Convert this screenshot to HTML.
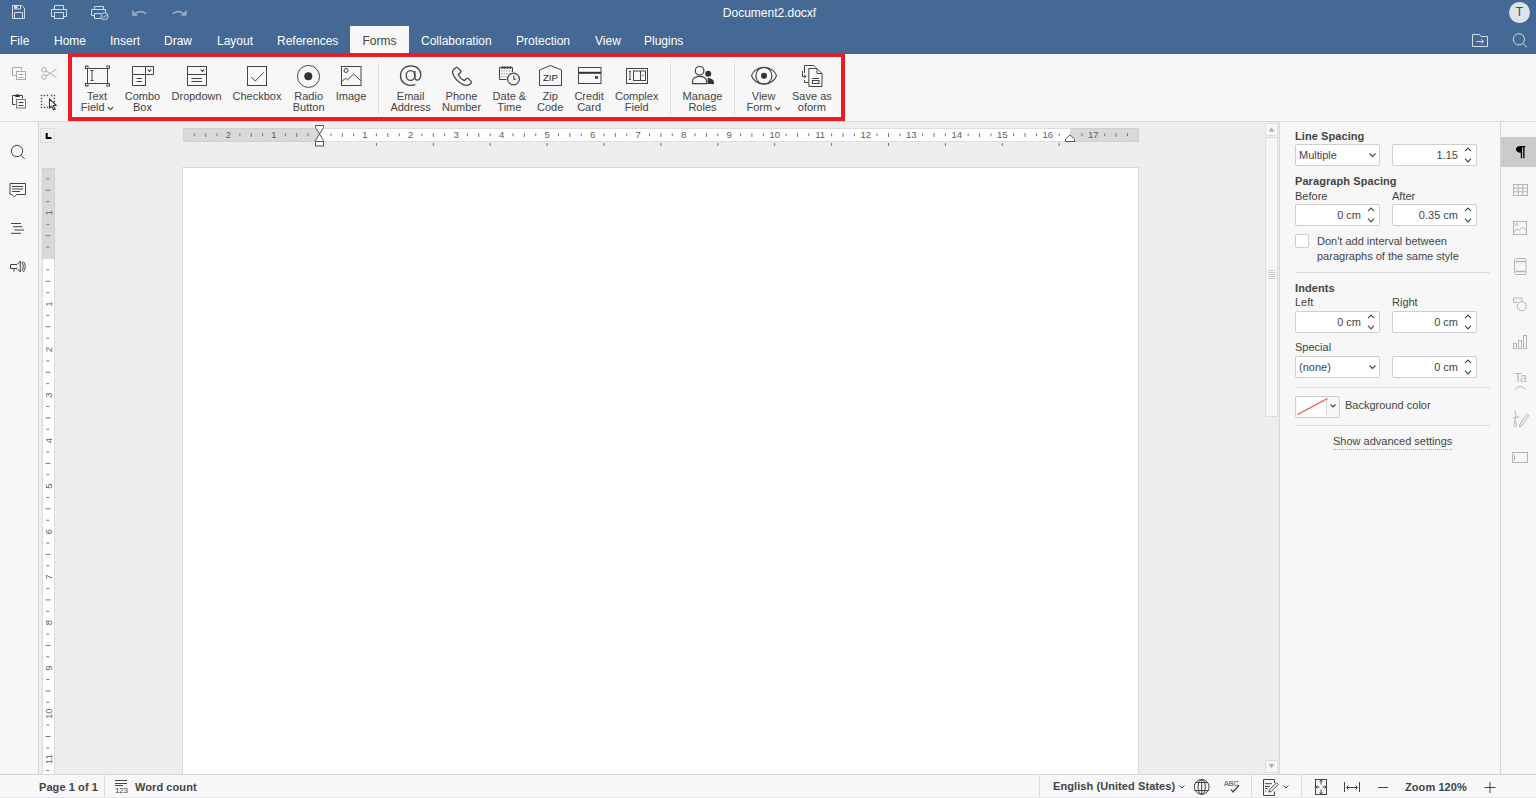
<!DOCTYPE html>
<html><head><meta charset="utf-8">
<style>
*{margin:0;padding:0;box-sizing:border-box}
html,body{width:1536px;height:798px;overflow:hidden;background:#f7f7f7;font-family:"Liberation Sans",sans-serif;color:#444}
.abs{position:absolute}
#hdr{position:absolute;left:0;top:0;width:1536px;height:54px;background:#446995}
#title{position:absolute;left:0;top:5px;width:1539px;text-align:center;font-size:12px;color:#fff;line-height:16px}
.tab{position:absolute;top:26px;height:28px;font-size:12px;line-height:30px;color:#fff;white-space:nowrap}
.tab.act{background:#f7f7f7;color:#444}
#tb{position:absolute;left:0;top:54px;width:1536px;height:68px;background:#f7f7f7;border-bottom:1px solid #d8d8d8}
#redbox{position:absolute;left:68px;top:53px;width:777px;height:68px;border:4px solid #ed1c24}
.cap{position:absolute;top:90.5px;font-size:11px;line-height:11px;text-align:center;white-space:nowrap;color:#444;transform:translateX(-50%)}
.sep{position:absolute;top:62px;width:1px;height:52px;background:#dcdcdc}
#left{position:absolute;left:0;top:122px;width:39px;height:652px;background:#f7f7f7;border-right:1px solid #d6d6d6}
#canvas{position:absolute;left:39px;top:122px;width:1240px;height:652px;background:#eeeeee}
#right{position:absolute;left:1279px;top:122px;width:257px;height:652px;background:#f7f7f7;border-left:1px solid #d6d6d6}
#rbar{position:absolute;left:1500px;top:122px;width:36px;height:652px;border-left:1px solid #d6d6d6;background:#f7f7f7}
#status{position:absolute;left:0;top:774px;width:1536px;height:24px;background:#f7f7f7;border-top:1px solid #d6d6d6}
#page{position:absolute;left:182px;top:167px;width:957px;height:620px;background:#fff;border:1px solid #dadada}
.lbl{position:absolute;font-size:11px;line-height:14px;color:#444;white-space:nowrap}
.lblb{position:absolute;font-size:11px;line-height:14px;color:#444;font-weight:bold;white-space:nowrap;letter-spacing:0.08px}
.inp{position:absolute;height:22px;background:#fff;border:1px solid #cfcfcf;border-radius:2px;font-size:11px;line-height:20px;color:#444}
svg{position:absolute;overflow:visible}
</style></head><body>
<div id="hdr"></div>
<div id="title">Document2.docxf</div>

<svg width="1536" height="53" style="left:0;top:0" fill="none" stroke="#d3dbe6" stroke-width="1">
 <!-- save -->
 <path d="M12.5,5.5 H21.8 L24.5,8.2 V18.5 H12.5 Z"/>
 <path d="M14.5,5.5 V9 H20.5 V5.5"/>
 <rect x="14.6" y="6" width="3" height="2.5" fill="#d3dbe6" stroke="none"/>
 <path d="M14.5,18.5 V12.5 H22.5 V18.5"/>
 <!-- print -->
 <path d="M54.5,9.5 V5.5 H63.5 V9.5"/>
 <path d="M54.5,16.5 H51.5 V9.5 H66.5 V16.5 H63.5"/>
 <rect x="54.5" y="12.5" width="9" height="6"/>
 <!-- quick print -->
 <path d="M94.5,9.5 V6.5 H103.5 V9.5"/>
 <path d="M94.5,15.5 H91.5 V9.5 H105.5 V12.5"/>
 <path d="M101,18.5 H94.5 V13.5 H101"/>
 <circle cx="104.5" cy="16.2" r="3.5"/>
 <path d="M102.8,16.3 L104,17.5 L106.3,15"/>
 <!-- folder -->
 <path d="M1472.5,46.5 V34.5 H1479.5 L1481,36.5 H1487.5 V46.5 Z"/>
 <path d="M1476.3,41.5 H1483.5 M1481.3,39.3 L1483.6,41.5 L1481.3,43.7"/>
 <!-- search -->
 <circle cx="1518.9" cy="39.3" r="5.6"/>
 <path d="M1522.8,43.3 L1526.8,47.3"/>
</svg>
<svg width="200" height="30" style="left:0;top:0" fill="#fff" opacity="0.45">
 <path d="M132.2,9.8 V15.8 H138.3 L136.4,13.9 C139,11.8 143,11.8 145.8,14.6 L146.6,13.4 C143.4,10 138.2,9.8 135.3,12.9 Z"/>
 <path d="M186.6,9.8 V15.8 H180.5 L182.4,13.9 C179.8,11.8 175.8,11.8 173,14.6 L172.2,13.4 C175.4,10 180.6,9.8 183.5,12.9 Z"/>
</svg>
<div class="abs" style="left:1509px;top:2px;width:21px;height:21px;border-radius:50%;background:#dde3ea;color:#444;font-size:12px;line-height:21px;text-align:center">T</div>
<div class="tab" style="left:0;padding:0 10px">File</div>
<div class="tab" style="left:42px;padding:0 12px">Home</div>
<div class="tab" style="left:98px;padding:0 12px">Insert</div>
<div class="tab" style="left:152px;padding:0 12px">Draw</div>
<div class="tab" style="left:205px;padding:0 12px">Layout</div>
<div class="tab" style="left:265px;padding:0 12px">References</div>
<div class="tab act" style="left:350px;width:59px;text-align:center">Forms</div>
<div class="tab" style="left:409px;padding:0 12px">Collaboration</div>
<div class="tab" style="left:504px;padding:0 12px">Protection</div>
<div class="tab" style="left:583px;padding:0 12px">View</div>
<div class="tab" style="left:632px;padding:0 12px">Plugins</div>

<div id="tb"></div>
<div id="left"></div>
<div id="canvas"></div>
<div id="page"></div>
<div class="abs" style="left:183px;top:128px;width:956px;height:14px;background:#d9d9d9;border:1px solid #d0d0d0"></div>
<div class="abs" style="left:320px;top:128px;width:750px;height:14px;background:#fff;border-top:1px solid #dcdcdc;border-bottom:1px solid #dcdcdc"></div>
<div class="abs" style="left:42px;top:168px;width:13px;height:606px;background:#fff;border-left:1px solid #dcdcdc;border-right:1px solid #dcdcdc"></div>
<div class="abs" style="left:42px;top:168px;width:13px;height:91px;background:#d9d9d9;border:1px solid #d0d0d0;border-bottom:none"></div>
<svg width="1536" height="798" style="left:0;top:0" fill="#666">
<rect x="193.82" y="133.3" width="1" height="3" fill="#777"/>
<rect x="205.20" y="133" width="1" height="4" fill="#777"/>
<rect x="216.58" y="133.3" width="1" height="3" fill="#777"/>
<text x="228.46" y="138" font-family="Liberation Sans" font-size="9.5" text-anchor="middle" fill="#606060">2</text>
<rect x="239.34" y="133.3" width="1" height="3" fill="#777"/>
<rect x="250.72" y="133" width="1" height="4" fill="#777"/>
<rect x="262.10" y="133.3" width="1" height="3" fill="#777"/>
<text x="273.98" y="138" font-family="Liberation Sans" font-size="9.5" text-anchor="middle" fill="#606060">1</text>
<rect x="284.86" y="133.3" width="1" height="3" fill="#777"/>
<rect x="296.24" y="133" width="1" height="4" fill="#777"/>
<rect x="307.62" y="133.3" width="1" height="3" fill="#777"/>
<rect x="330.38" y="133.3" width="1" height="3" fill="#777"/>
<rect x="341.76" y="133" width="1" height="4" fill="#777"/>
<rect x="353.14" y="133.3" width="1" height="3" fill="#777"/>
<text x="365.02" y="138" font-family="Liberation Sans" font-size="9.5" text-anchor="middle" fill="#606060">1</text>
<rect x="375.90" y="133.3" width="1" height="3" fill="#777"/>
<rect x="387.28" y="133" width="1" height="4" fill="#777"/>
<rect x="398.66" y="133.3" width="1" height="3" fill="#777"/>
<text x="410.54" y="138" font-family="Liberation Sans" font-size="9.5" text-anchor="middle" fill="#606060">2</text>
<rect x="421.42" y="133.3" width="1" height="3" fill="#777"/>
<rect x="432.80" y="133" width="1" height="4" fill="#777"/>
<rect x="444.18" y="133.3" width="1" height="3" fill="#777"/>
<text x="456.06" y="138" font-family="Liberation Sans" font-size="9.5" text-anchor="middle" fill="#606060">3</text>
<rect x="466.94" y="133.3" width="1" height="3" fill="#777"/>
<rect x="478.32" y="133" width="1" height="4" fill="#777"/>
<rect x="489.70" y="133.3" width="1" height="3" fill="#777"/>
<text x="501.58" y="138" font-family="Liberation Sans" font-size="9.5" text-anchor="middle" fill="#606060">4</text>
<rect x="512.46" y="133.3" width="1" height="3" fill="#777"/>
<rect x="523.84" y="133" width="1" height="4" fill="#777"/>
<rect x="535.22" y="133.3" width="1" height="3" fill="#777"/>
<text x="547.10" y="138" font-family="Liberation Sans" font-size="9.5" text-anchor="middle" fill="#606060">5</text>
<rect x="557.98" y="133.3" width="1" height="3" fill="#777"/>
<rect x="569.36" y="133" width="1" height="4" fill="#777"/>
<rect x="580.74" y="133.3" width="1" height="3" fill="#777"/>
<text x="592.62" y="138" font-family="Liberation Sans" font-size="9.5" text-anchor="middle" fill="#606060">6</text>
<rect x="603.50" y="133.3" width="1" height="3" fill="#777"/>
<rect x="614.88" y="133" width="1" height="4" fill="#777"/>
<rect x="626.26" y="133.3" width="1" height="3" fill="#777"/>
<text x="638.14" y="138" font-family="Liberation Sans" font-size="9.5" text-anchor="middle" fill="#606060">7</text>
<rect x="649.02" y="133.3" width="1" height="3" fill="#777"/>
<rect x="660.40" y="133" width="1" height="4" fill="#777"/>
<rect x="671.78" y="133.3" width="1" height="3" fill="#777"/>
<text x="683.66" y="138" font-family="Liberation Sans" font-size="9.5" text-anchor="middle" fill="#606060">8</text>
<rect x="694.54" y="133.3" width="1" height="3" fill="#777"/>
<rect x="705.92" y="133" width="1" height="4" fill="#777"/>
<rect x="717.30" y="133.3" width="1" height="3" fill="#777"/>
<text x="729.18" y="138" font-family="Liberation Sans" font-size="9.5" text-anchor="middle" fill="#606060">9</text>
<rect x="740.06" y="133.3" width="1" height="3" fill="#777"/>
<rect x="751.44" y="133" width="1" height="4" fill="#777"/>
<rect x="762.82" y="133.3" width="1" height="3" fill="#777"/>
<text x="774.70" y="138" font-family="Liberation Sans" font-size="9.5" text-anchor="middle" fill="#606060">10</text>
<rect x="785.58" y="133.3" width="1" height="3" fill="#777"/>
<rect x="796.96" y="133" width="1" height="4" fill="#777"/>
<rect x="808.34" y="133.3" width="1" height="3" fill="#777"/>
<text x="820.22" y="138" font-family="Liberation Sans" font-size="9.5" text-anchor="middle" fill="#606060">11</text>
<rect x="831.10" y="133.3" width="1" height="3" fill="#777"/>
<rect x="842.48" y="133" width="1" height="4" fill="#777"/>
<rect x="853.86" y="133.3" width="1" height="3" fill="#777"/>
<text x="865.74" y="138" font-family="Liberation Sans" font-size="9.5" text-anchor="middle" fill="#606060">12</text>
<rect x="876.62" y="133.3" width="1" height="3" fill="#777"/>
<rect x="888.00" y="133" width="1" height="4" fill="#777"/>
<rect x="899.38" y="133.3" width="1" height="3" fill="#777"/>
<text x="911.26" y="138" font-family="Liberation Sans" font-size="9.5" text-anchor="middle" fill="#606060">13</text>
<rect x="922.14" y="133.3" width="1" height="3" fill="#777"/>
<rect x="933.52" y="133" width="1" height="4" fill="#777"/>
<rect x="944.90" y="133.3" width="1" height="3" fill="#777"/>
<text x="956.78" y="138" font-family="Liberation Sans" font-size="9.5" text-anchor="middle" fill="#606060">14</text>
<rect x="967.66" y="133.3" width="1" height="3" fill="#777"/>
<rect x="979.04" y="133" width="1" height="4" fill="#777"/>
<rect x="990.42" y="133.3" width="1" height="3" fill="#777"/>
<text x="1002.30" y="138" font-family="Liberation Sans" font-size="9.5" text-anchor="middle" fill="#606060">15</text>
<rect x="1013.18" y="133.3" width="1" height="3" fill="#777"/>
<rect x="1024.56" y="133" width="1" height="4" fill="#777"/>
<rect x="1035.94" y="133.3" width="1" height="3" fill="#777"/>
<text x="1047.82" y="138" font-family="Liberation Sans" font-size="9.5" text-anchor="middle" fill="#606060">16</text>
<rect x="1058.70" y="133.3" width="1" height="3" fill="#777"/>

<rect x="1081.46" y="133.3" width="1" height="3" fill="#777"/>
<text x="1093.34" y="138" font-family="Liberation Sans" font-size="9.5" text-anchor="middle" fill="#606060">17</text>
<rect x="1104.22" y="133.3" width="1" height="3" fill="#777"/>
<rect x="1115.60" y="133" width="1" height="4" fill="#777"/>
<rect x="1126.98" y="133.3" width="1" height="3" fill="#777"/>
<rect x="375.90" y="143" width="1" height="3" fill="#777"/>
<rect x="432.80" y="143" width="1" height="3" fill="#777"/>
<rect x="489.70" y="143" width="1" height="3" fill="#777"/>
<rect x="546.60" y="143" width="1" height="3" fill="#777"/>
<rect x="603.50" y="143" width="1" height="3" fill="#777"/>
<rect x="660.40" y="143" width="1" height="3" fill="#777"/>
<rect x="717.30" y="143" width="1" height="3" fill="#777"/>
<rect x="774.20" y="143" width="1" height="3" fill="#777"/>
<rect x="831.10" y="143" width="1" height="3" fill="#777"/>
<rect x="888.00" y="143" width="1" height="3" fill="#777"/>
<rect x="944.90" y="143" width="1" height="3" fill="#777"/>
<rect x="1001.80" y="143" width="1" height="3" fill="#777"/>
<rect x="1058.70" y="143" width="1" height="3" fill="#777"/>
</svg>
<svg width="1536" height="798" style="left:0;top:0" fill="#666">
<rect x="46.3" y="178.34" width="3" height="1" fill="#777"/>
<rect x="45.5" y="189.72" width="5" height="1" fill="#777"/>
<rect x="46.3" y="201.10" width="3" height="1" fill="#777"/>
<text x="0" y="0" transform="translate(52.3,212.98) rotate(-90)" font-family="Liberation Sans" font-size="9.5" text-anchor="middle" fill="#606060">1</text>
<rect x="46.3" y="223.86" width="3" height="1" fill="#777"/>
<rect x="45.5" y="235.24" width="5" height="1" fill="#777"/>
<rect x="46.3" y="246.62" width="3" height="1" fill="#777"/>
<rect x="46.3" y="269.38" width="3" height="1" fill="#777"/>
<rect x="45.5" y="280.76" width="5" height="1" fill="#777"/>
<rect x="46.3" y="292.14" width="3" height="1" fill="#777"/>
<text x="0" y="0" transform="translate(52.3,304.02) rotate(-90)" font-family="Liberation Sans" font-size="9.5" text-anchor="middle" fill="#606060">1</text>
<rect x="46.3" y="314.90" width="3" height="1" fill="#777"/>
<rect x="45.5" y="326.28" width="5" height="1" fill="#777"/>
<rect x="46.3" y="337.66" width="3" height="1" fill="#777"/>
<text x="0" y="0" transform="translate(52.3,349.54) rotate(-90)" font-family="Liberation Sans" font-size="9.5" text-anchor="middle" fill="#606060">2</text>
<rect x="46.3" y="360.42" width="3" height="1" fill="#777"/>
<rect x="45.5" y="371.80" width="5" height="1" fill="#777"/>
<rect x="46.3" y="383.18" width="3" height="1" fill="#777"/>
<text x="0" y="0" transform="translate(52.3,395.06) rotate(-90)" font-family="Liberation Sans" font-size="9.5" text-anchor="middle" fill="#606060">3</text>
<rect x="46.3" y="405.94" width="3" height="1" fill="#777"/>
<rect x="45.5" y="417.32" width="5" height="1" fill="#777"/>
<rect x="46.3" y="428.70" width="3" height="1" fill="#777"/>
<text x="0" y="0" transform="translate(52.3,440.58) rotate(-90)" font-family="Liberation Sans" font-size="9.5" text-anchor="middle" fill="#606060">4</text>
<rect x="46.3" y="451.46" width="3" height="1" fill="#777"/>
<rect x="45.5" y="462.84" width="5" height="1" fill="#777"/>
<rect x="46.3" y="474.22" width="3" height="1" fill="#777"/>
<text x="0" y="0" transform="translate(52.3,486.10) rotate(-90)" font-family="Liberation Sans" font-size="9.5" text-anchor="middle" fill="#606060">5</text>
<rect x="46.3" y="496.98" width="3" height="1" fill="#777"/>
<rect x="45.5" y="508.36" width="5" height="1" fill="#777"/>
<rect x="46.3" y="519.74" width="3" height="1" fill="#777"/>
<text x="0" y="0" transform="translate(52.3,531.62) rotate(-90)" font-family="Liberation Sans" font-size="9.5" text-anchor="middle" fill="#606060">6</text>
<rect x="46.3" y="542.50" width="3" height="1" fill="#777"/>
<rect x="45.5" y="553.88" width="5" height="1" fill="#777"/>
<rect x="46.3" y="565.26" width="3" height="1" fill="#777"/>
<text x="0" y="0" transform="translate(52.3,577.14) rotate(-90)" font-family="Liberation Sans" font-size="9.5" text-anchor="middle" fill="#606060">7</text>
<rect x="46.3" y="588.02" width="3" height="1" fill="#777"/>
<rect x="45.5" y="599.40" width="5" height="1" fill="#777"/>
<rect x="46.3" y="610.78" width="3" height="1" fill="#777"/>
<text x="0" y="0" transform="translate(52.3,622.66) rotate(-90)" font-family="Liberation Sans" font-size="9.5" text-anchor="middle" fill="#606060">8</text>
<rect x="46.3" y="633.54" width="3" height="1" fill="#777"/>
<rect x="45.5" y="644.92" width="5" height="1" fill="#777"/>
<rect x="46.3" y="656.30" width="3" height="1" fill="#777"/>
<text x="0" y="0" transform="translate(52.3,668.18) rotate(-90)" font-family="Liberation Sans" font-size="9.5" text-anchor="middle" fill="#606060">9</text>
<rect x="46.3" y="679.06" width="3" height="1" fill="#777"/>
<rect x="45.5" y="690.44" width="5" height="1" fill="#777"/>
<rect x="46.3" y="701.82" width="3" height="1" fill="#777"/>
<text x="0" y="0" transform="translate(52.3,713.70) rotate(-90)" font-family="Liberation Sans" font-size="9.5" text-anchor="middle" fill="#606060">10</text>
<rect x="46.3" y="724.58" width="3" height="1" fill="#777"/>
<rect x="45.5" y="735.96" width="5" height="1" fill="#777"/>
<rect x="46.3" y="747.34" width="3" height="1" fill="#777"/>
<text x="0" y="0" transform="translate(52.3,759.22) rotate(-90)" font-family="Liberation Sans" font-size="9.5" text-anchor="middle" fill="#606060">11</text>
<rect x="46.3" y="770.10" width="3" height="1" fill="#777"/>
</svg>
<svg width="1536" height="798" style="left:0;top:0" fill="#fff" stroke="#555" stroke-width="1">
 <path d="M315.5,125.5 H323.5 V127.5 L319.5,134 L315.5,127.5 Z"/>
 <path d="M319.5,134 L323.5,140.5 V141.5 H315.5 V140.5 Z"/>
 <rect x="315.5" y="141.5" width="8" height="4.5"/>
 <path d="M1070,134.8 L1074.5,139.2 V141.5 H1065.5 V139.2 Z"/>
</svg>
<div class="abs" style="left:40px;top:128px;width:15px;height:15px;border:1px solid #dcdcdc;background:#eeeeee"></div>
<svg width="60" height="160" style="left:0;top:0"><path d="M46.7,133 V138 H51.5" stroke="#000" stroke-width="2" fill="none"/></svg>
<div id="right"></div>
<div id="rbar"></div>
<div id="status"></div>

<!-- toolbar left small icons -->
<svg width="1536" height="798" style="left:0;top:0" fill="none" stroke-linecap="butt">
 <!-- copy (disabled) -->
 <g stroke="#aaa" stroke-width="1">
  <path d="M15.5,75.5 h-3 v-8 h9 v3"/>
  <rect x="16.5" y="71.5" width="9" height="8"/>
  <path d="M18.5,74.5 h5 M18.5,77.5 h5"/>
 </g>
 <!-- paste -->
 <g stroke="#444" stroke-width="1">
  <path d="M15.5,104.5 h-3 v-9 h10 v3"/>
  <rect x="16.5" y="99.5" width="9" height="8.5" stroke="#777"/>
  <path d="M18.5,102.5 h5 M18.5,105.5 h5"/>
 </g>
 <rect x="15" y="94.5" width="5" height="2.5" rx="1" fill="#333"/>
 <!-- scissors (disabled) -->
 <g stroke="#aaa" stroke-width="1">
  <circle cx="44" cy="69.8" r="2.3"/>
  <circle cx="44" cy="77" r="2.3"/>
  <path d="M46,71 L56.5,77.5 M46,76 L56.5,69"/>
 </g>
 <!-- select all -->
 <g fill="#444">
  <rect x="40.8" y="94.8" width="1.4" height="1.4"/><rect x="43.8" y="94.8" width="1.4" height="1.4"/><rect x="46.8" y="94.8" width="1.4" height="1.4"/><rect x="50.8" y="94.8" width="1.4" height="1.4"/><rect x="53.8" y="94.8" width="1.4" height="1.4"/>
  <rect x="40.8" y="97.8" width="1.4" height="1.4"/><rect x="40.8" y="100.8" width="1.4" height="1.4"/><rect x="40.8" y="103.8" width="1.4" height="1.4"/>
  <rect x="40.8" y="106.8" width="1.4" height="1.4"/><rect x="43.8" y="106.8" width="1.4" height="1.4"/><rect x="46.8" y="106.8" width="1.4" height="1.4"/>
  <rect x="53.8" y="97.8" width="1.4" height="1.4"/><rect x="53.8" y="100.8" width="1.4" height="1.4"/>
 </g>
 <path d="M49.5,98.8 L49.5,108.2 L51.6,106.2 L53.6,109.8 L55.2,109 L53.3,105.5 L56.3,105.5 Z" fill="#f7f7f7" stroke="#333" stroke-width="1.1" stroke-linejoin="round"/>
</svg>

<!-- form icons -->
<svg width="1536" height="798" style="left:0;top:0" fill="none" stroke="#444" stroke-width="1">
 <!-- text field -->
 <path d="M88.5,68.5 H106.5 M88.5,83.5 H106.5 M87.5,68.5 V83 M107.5,68.5 V83"/>
 <rect x="85.5" y="66" width="2.5" height="2.5"/><rect x="107" y="66" width="2.5" height="2.5"/>
 <rect x="85.5" y="83.5" width="2.5" height="2.5"/><rect x="107" y="83.5" width="2.5" height="2.5"/>
 <path d="M90.5,70.5 h3 M92,70.5 v10 M90.5,80.5 h3"/>
 <!-- combo box -->
 <path d="M132.5,74.5 V66.5 H153.5 V74.5 H132.5 V85.5 H145.5 V66.5"/>
 <path d="M147.8,69.6 l1.7,1.7 l1.7,-1.7" stroke-width="1.2"/>
 <path d="M136.5,78.5 h5.5 M136.5,81.5 h5.5"/>
 <!-- dropdown -->
 <rect x="187.5" y="66.5" width="19" height="19"/>
 <path d="M187.5,74.5 H206.5"/>
 <path d="M200.8,69.6 l1.7,1.7 l1.7,-1.7" stroke-width="1.2"/>
 <path d="M191.5,78.5 h10.5 M191.5,81.5 h10.5"/>
 <!-- checkbox -->
 <rect x="247.5" y="66.5" width="19" height="19"/>
 <path d="M251.3,77.3 L255.3,81 L263.8,72.3"/>
 <!-- radio -->
 <circle cx="308.5" cy="76.4" r="11"/>
 <circle cx="308.3" cy="76.3" r="4" fill="#333" stroke="none"/>
 <!-- image -->
 <rect x="341.5" y="66.5" width="19.5" height="19"/>
 <circle cx="346" cy="70.5" r="2"/>
 <path d="M341.7,81.5 L345.5,78.3 L347.5,79.9 L353.6,74.1 L360.8,80.6"/>
 <!-- email @ -->
 <path stroke-width="1.3" d="M415.3,84.7 C412,85.8 406.5,85.8 403.5,82.8 C399.5,79.2 399.6,72.2 403.4,68.6 C407.2,64.9 414.5,64.9 418.2,68.5 C421.3,71.5 421.6,76.5 419.5,79 C418.3,80.5 415.3,80.8 414.9,78 V71"/>
 <ellipse cx="410.5" cy="75.5" rx="4.3" ry="4.9" stroke-width="1.3"/>
 <!-- phone -->
 <path stroke-width="1.3" stroke-linejoin="round" d="M455.4,67.9 C456.1,67.2 457.1,67.2 457.8,67.9 L460.4,70.5 C461,71.1 461,71.9 460.4,72.5 L458.2,74.5 C459.5,77.1 461.7,79.4 464.3,80.7 L466.4,78.6 C467,78 467.8,78 468.4,78.6 L470.9,81.1 C471.5,81.7 471.5,82.6 470.9,83.2 L469.5,84.4 C468,85.6 465.5,85.5 462.8,84.3 C458.7,82.4 455.4,79 453.5,75.2 C452.3,72.7 452.4,70.6 453.6,69.5 Z"/>
 <!-- date/time -->
 <path d="M506.5,79.5 H499.5 V67.5 H512.5 V72"/>
 <g fill="#444" stroke="none">
  <circle cx="502.4" cy="67.6" r="1.3"/><circle cx="504.7" cy="67.6" r="1.3"/><circle cx="507.5" cy="67.6" r="1.3"/><circle cx="510.3" cy="67.6" r="1.3"/>
 </g>
 <g fill="#bbb" stroke="none">
  <rect x="501" y="70" width="1.5" height="1.3"/><rect x="503.5" y="70" width="1.5" height="1.3"/><rect x="506" y="70" width="1.5" height="1.3"/><rect x="508.5" y="70" width="1.5" height="1.3"/><rect x="511" y="70" width="1" height="1.3"/>
  <rect x="501" y="73" width="1.5" height="1.3"/><rect x="503.5" y="73" width="1.5" height="1.3"/><rect x="506" y="73" width="1.5" height="1.3"/><rect x="508.5" y="73" width="1.5" height="1.3"/>
  <rect x="501" y="76" width="1.5" height="1.3"/><rect x="503.5" y="76" width="1.5" height="1.3"/><rect x="506" y="76" width="1" height="1.3"/>
 </g>
 <circle cx="513.5" cy="79" r="5.9" stroke-width="1.2"/>
 <path d="M513.8,75.3 V79.3 H516.2" stroke-width="1.1"/>
 <!-- zip -->
 <path d="M539.5,85.5 V70 L550.3,65.5 L561.5,70 V85.5 Z" stroke-linejoin="miter"/>
 <text x="550.4" y="80.9" font-family="Liberation Sans" font-size="9.6" fill="#2a2a2a" stroke="none" text-anchor="middle">ZIP</text>
 <!-- credit card -->
 <rect x="578.5" y="67.5" width="22.5" height="16"/>
 <rect x="578.5" y="71.8" width="22.5" height="2" fill="#333" stroke="none"/>
 <rect x="595" y="76.2" width="3" height="2.5" fill="#333" stroke="none"/>
 <!-- complex field -->
 <rect x="626.5" y="68.5" width="21" height="15"/>
 <path d="M629,71.5 h2 M630,71.5 v8 M629,79.5 h2"/>
 <rect x="633.5" y="71" width="12" height="9.5"/>
 <path d="M640.5,71 V80.5"/>
 <path d="M642,75 l0.9,0.9 l0.9,-0.9" stroke-width="0.8"/>
 <!-- manage roles -->
 <circle cx="699.6" cy="70.8" r="4.3" stroke-width="1.2"/>
 <path stroke-width="1.2" d="M692.5,83.6 V81.2 C692.5,78.3 695.8,76.4 699.6,76.4 C703.4,76.4 706.6,78.3 706.6,81.2 V83.6 Z"/>
 <circle cx="708.2" cy="73.8" r="3" fill="#333" stroke="none"/>
 <path d="M707.6,78.1 C711.2,78.1 714,80 714,82.4 V84.1 H707.6 Z" fill="#333" stroke="none"/>
 <!-- view form eye -->
 <path stroke-width="1.2" d="M751.5,75.7 C752.6,72 757,67.3 764,67.3 C771,67.3 775.4,72 776.5,75.7 C775.4,79.4 771,84.1 764,84.1 C757,84.1 752.6,79.4 751.5,75.7 Z"/>
 <ellipse cx="763.9" cy="75.7" rx="8" ry="8.3" stroke-width="1.2"/>
 <circle cx="764" cy="75.7" r="3" fill="#333" stroke="none"/>
 <!-- save as oform -->
 <path d="M804.5,73 V65.5 H814 L815.8,67.5 M804.5,80 V82.5 H808" />
 <path d="M802.5,70.8 V76.4 H804.5"/>
 <path d="M804.3,74.6 L806.8,76.4 L804.3,78.2 Z" fill="#444" stroke="none"/>
 <path d="M808.8,68.5 H817 L822,73.5 V86.5 H808.8 Z"/>
 <path d="M817,68.5 V73.5 H822"/>
 <path d="M812.2,78.5 h6.7"/>
 <rect x="812.5" y="80.5" width="6.5" height="3"/>
</svg>

<svg width="1536" height="130" style="left:0;top:0" fill="none" stroke="#444" stroke-width="1.1">
 <path d="M108,107.2 L110.5,109.7 L113,107.2"/>
 <path d="M775.3,107.2 L777.8,109.7 L780.3,107.2"/>
</svg>
<!-- separators -->
<div class="sep" style="left:378px"></div>
<div class="sep" style="left:670px"></div>
<div class="sep" style="left:734px"></div>

<!-- captions -->
<div class="cap" style="left:97px">Text<br>Field<span style="display:inline-block;width:8.5px"></span></div>
<div class="cap" style="left:142.5px">Combo<br>Box</div>
<div class="cap" style="left:196.6px">Dropdown</div>
<div class="cap" style="left:257px">Checkbox</div>
<div class="cap" style="left:308.7px">Radio<br>Button</div>
<div class="cap" style="left:351px">Image</div>
<div class="cap" style="left:410.6px">Email<br>Address</div>
<div class="cap" style="left:461.5px">Phone<br>Number</div>
<div class="cap" style="left:509.4px">Date &amp;<br>Time</div>
<div class="cap" style="left:550.2px">Zip<br>Code</div>
<div class="cap" style="left:589.1px">Credit<br>Card</div>
<div class="cap" style="left:636.7px">Complex<br>Field</div>
<div class="cap" style="left:702.5px">Manage<br>Roles</div>
<div class="cap" style="left:763.6px">View<br>Form<span style="display:inline-block;width:8.5px"></span></div>
<div class="cap" style="left:811.9px">Save as<br>oform</div>

<svg width="40" height="300" style="left:0;top:0" fill="none" stroke="#444" stroke-width="1">
 <circle cx="17" cy="151" r="5.7"/>
 <path d="M21,155.2 L24.6,158.8"/>
 <path d="M10,183.5 H25.5 V194.5 H16.8 L14.3,196.8 L11.8,194.5 H10 Z" stroke-linejoin="miter"/>
 <path d="M12,186.5 H23 M12,189 H23 M12,191.5 H20"/>
 <path d="M11,223.5 H21 M13,226.7 H22.3 M14.4,230 H24 M11,233.3 H21"/>
 <path d="M10.5,264.5 H17 L20.3,261 V272 L17,268.5 H10.5 Z" stroke-linejoin="round"/>
 <path d="M14,268.5 V271.6"/>
 <path d="M22,262 C23.6,264 23.6,269 22,271 M23.3,261.5 C25.8,264 25.8,269.5 23.3,272"/>
</svg>

<div class="abs" style="left:1501px;top:137px;width:35px;height:30px;background:#cbcbcb"></div>
<svg width="1536" height="200" style="left:0;top:0"><path d="M1520.5,146 H1525.3 V147.3 H1524.5 V158.2 H1523.2 V147.3 H1522.1 V158.2 H1520.8 V152.7 C1518,152.7 1515.9,151.5 1515.9,149.35 C1515.9,147.2 1518,146 1520.5,146 Z" fill="#000"/></svg>
<svg width="1536" height="500" style="left:0;top:0" fill="none" stroke="#b4b4b4" stroke-width="1">
 <rect x="1513.5" y="184.5" width="14" height="11"/>
 <path d="M1513.5,188.2 H1527.5 M1513.5,191.8 H1527.5 M1518.2,184.5 V195.5 M1522.8,184.5 V195.5"/>
 <rect x="1513.5" y="221.5" width="13" height="13"/>
 <circle cx="1516.5" cy="224.5" r="1.2"/>
 <path d="M1513.5,232 L1517,229 L1519,230.5 L1522.5,227 L1526.5,231"/>
 <rect x="1514.5" y="258.5" width="11.5" height="16" rx="1"/>
 <path d="M1515.5,261.5 H1525 M1515.5,271.5 H1525" stroke-width="1.5"/>
 <path d="M1517.5,302.5 H1513.5 V298 H1522 V301"/>
 <circle cx="1521.8" cy="306.2" r="4.6"/>
 <rect x="1513.5" y="343.5" width="3" height="5"/>
 <rect x="1518.5" y="340.5" width="3" height="8"/>
 <rect x="1523.5" y="335.5" width="3" height="13"/>
 <path d="M1515,389.5 Q1520.3,383.5 1525.6,389.5"/>
 <path d="M1514.5,410.5 C1515.8,412.5 1516.2,415 1515.6,418 L1514.6,421.5 C1513.6,424.5 1514,427 1515.6,426.6 C1517.2,426.2 1516.8,423.2 1515.2,421.2 M1513.5,417.8 L1519.5,416.8 M1519.6,427.2 L1520,424.2 L1527,414.2 L1528.9,415.5 L1521.9,425.5 Z" stroke-linejoin="round"/>
 <rect x="1512.5" y="452.5" width="15" height="10"/>
 <path d="M1514.5,454.5 V460.5"/>
</svg>
<div class="abs" style="left:1514px;top:371px;font-size:13px;line-height:14px;color:#bdbdbd;letter-spacing:-0.8px;font-weight:normal">Ta</div>

<!-- scrollbar -->
<div class="abs" style="left:1265px;top:123px;width:13px;height:13px;border:1px solid #dcdcdc;border-radius:1px;background:#f7f7f7"></div>
<div class="abs" style="left:1265px;top:137px;width:13px;height:280px;border:1px solid #dcdcdc;border-radius:1px;background:#f7f7f7"></div>
<div class="abs" style="left:1268px;top:270px;width:7px;height:9px;background:repeating-linear-gradient(#d0d0d0 0 1px,transparent 1px 2px)"></div>
<div class="abs" style="left:1265px;top:760px;width:13px;height:13px;border:1px solid #dcdcdc;border-radius:1px;background:#f7f7f7"></div>
<svg width="1536" height="798" style="left:0;top:0"><path d="M1268.5,131.5 L1271.5,127.5 L1274.5,131.5 Z" fill="#adadad"/><path d="M1268.5,764 L1271.5,768 L1274.5,764 Z" fill="#adadad"/></svg>


<!-- right panel content -->
<div class="lblb" style="left:1295px;top:129px">Line Spacing</div>
<div class="inp" style="left:1295px;top:144px;width:85px;padding-left:3px">Multiple</div>
<div class="inp" style="left:1392px;top:144px;width:85px;text-align:right;padding-right:18px">1.15</div>
<div class="lblb" style="left:1295px;top:173.5px">Paragraph Spacing</div>
<div class="lbl" style="left:1295px;top:188.5px">Before</div>
<div class="lbl" style="left:1392px;top:188.5px">After</div>
<div class="inp" style="left:1295px;top:204px;width:85px;text-align:right;padding-right:18px">0 cm</div>
<div class="inp" style="left:1392px;top:204px;width:85px;text-align:right;padding-right:18px">0.35 cm</div>
<div class="abs" style="left:1295px;top:234px;width:14px;height:14px;border:1px solid #cfcfcf;border-radius:2px;background:#fff"></div>
<div class="lbl" style="left:1317px;top:234px;line-height:15px">Don't add interval between<br>paragraphs of the same style</div>
<div class="abs" style="left:1295px;top:272px;width:195px;height:1px;background:#dcdcdc"></div>
<div class="lblb" style="left:1295px;top:281px">Indents</div>
<div class="lbl" style="left:1295px;top:294.5px">Left</div>
<div class="lbl" style="left:1392px;top:294.5px">Right</div>
<div class="inp" style="left:1295px;top:311px;width:85px;text-align:right;padding-right:18px">0 cm</div>
<div class="inp" style="left:1392px;top:311px;width:85px;text-align:right;padding-right:18px">0 cm</div>
<div class="lbl" style="left:1295px;top:339.5px">Special</div>
<div class="inp" style="left:1295px;top:356px;width:85px;padding-left:3px">(none)</div>
<div class="inp" style="left:1392px;top:356px;width:85px;text-align:right;padding-right:18px">0 cm</div>
<div class="abs" style="left:1295px;top:387px;width:195px;height:1px;background:#dcdcdc"></div>
<div class="abs" style="left:1295px;top:396px;width:45px;height:22px;border:1px solid #cfcfcf;border-radius:2px;background:#f7f7f7"></div>
<div class="abs" style="left:1297px;top:398px;width:30px;height:18px;background:#fff;border-right:1px solid #e0e0e0"></div>
<div class="lbl" style="left:1345px;top:398px">Background color</div>
<div class="abs" style="left:1295px;top:425px;width:195px;height:1px;background:#dcdcdc"></div>
<div class="lbl" style="left:1333px;top:434px;border-bottom:1px dotted #aaa;line-height:14px;padding-bottom:1px">Show advanced settings</div>
<svg width="1536" height="500" style="left:0;top:0" fill="none" stroke="#444" stroke-width="1">
 <path d="M1369.5,153.5 L1372.5,156.5 L1375.5,153.5" stroke-width="1.1"/>
 <path d="M1369.5,365.5 L1372.5,368.5 L1375.5,365.5" stroke-width="1.1"/>
 <path d="M1330.5,404.5 L1333,407 L1335.5,404.5" stroke-width="1.1"/>
 <path d="M1297.5,414.5 L1327.5,398.5" stroke="#ff4040" stroke-width="1.1"/>
</svg>
<svg width="1536" height="500" style="left:0;top:0" fill="none" stroke="#444" stroke-width="1.1">
 <path d="M1465,151.2 L1468,148 L1471,151.2 M1465,158.7 L1468,161.9 L1471,158.7"/>
 <path d="M1368,211.2 L1371,208 L1374,211.2 M1368,218.7 L1371,221.9 L1374,218.7"/>
 <path d="M1465,211.2 L1468,208 L1471,211.2 M1465,218.7 L1468,221.9 L1471,218.7"/>
 <path d="M1368,318.2 L1371,315 L1374,318.2 M1368,325.7 L1371,328.9 L1374,325.7"/>
 <path d="M1465,318.2 L1468,315 L1471,318.2 M1465,325.7 L1468,328.9 L1471,325.7"/>
 <path d="M1465,363.2 L1468,360 L1471,363.2 M1465,370.7 L1468,373.9 L1471,370.7"/>
</svg>

<div class="abs" style="left:0;top:797px;width:1536px;height:1px;background:#e7e3ef"></div>
<div class="abs" style="left:104px;top:775px;width:1px;height:22px;background:#dcdcdc"></div>
<div class="abs" style="left:1039px;top:775px;width:1px;height:22px;background:#dcdcdc"></div>
<div class="abs" style="left:1251px;top:775px;width:1px;height:22px;background:#dcdcdc"></div>
<div class="abs" style="left:1301px;top:775px;width:1px;height:22px;background:#dcdcdc"></div>
<div class="lblb" style="left:39px;top:780px">Page 1 of 1</div>
<div class="lblb" style="left:135px;top:780px">Word count</div>
<div class="lblb" style="left:1053px;top:779px">English (United States)</div>
<div class="lblb" style="left:1405px;top:780px">Zoom 120%</div>
<svg width="1536" height="798" style="left:0;top:0" fill="none" stroke="#444" stroke-width="1">
 <path d="M115,780.5 H127 M115,783.5 H127 M115,785.5 H123"/>
 <path d="M1179.5,785.5 L1182,788 L1184.5,785.5"/>
 <circle cx="1201.7" cy="786.9" r="7.4"/>
 <ellipse cx="1201.7" cy="786.9" rx="3.6" ry="7.4"/>
 <path d="M1201.7,779.5 V794.3 M1195.5,782.5 H1208 M1194.5,790.5 H1209"/>
 <path d="M1231,789.3 L1233,792 L1239,785.3" stroke-width="1.3"/>
 <path d="M1274.5,783 V779.5 H1263.5 V795.5 H1274.5 V791.5"/>
 <path d="M1265,783.7 H1272 M1265,786.5 H1270 M1265,788.5 H1267.5 M1265,791 H1266"/>
 <path d="M1268.8,792 L1269.5,789.8 L1276.5,782.8 L1278.2,784.5 L1271.2,791.5 Z" stroke-linejoin="round"/>
 <path d="M1283.5,785.5 L1286,788 L1288.5,785.5"/>
 <rect x="1315.5" y="779.5" width="11" height="15"/>
 <path d="M1321,780 V784.5 M1321,789.5 V794 M1316,787 H1319.5 M1322.5,787 H1326" stroke-width="1"/>
 <path d="M1319.6,781.6 L1321,780.2 L1322.4,781.6 M1319.6,792.4 L1321,793.8 L1322.4,792.4 M1317.4,785.6 L1316,787 L1317.4,788.4 M1324.6,785.6 L1326,787 L1324.6,788.4"/>
 <path d="M1344.5,782 V792 M1359.5,782 V792 M1346.5,787.5 H1357.5 M1348.5,785.5 L1346.5,787.5 L1348.5,789.5 M1355.5,785.5 L1357.5,787.5 L1355.5,789.5"/>
 <path d="M1378,787.5 H1388"/>
 <path d="M1484.5,787.5 H1495.5 M1490,782 V793"/>
</svg>
<div class="abs" style="left:115px;top:786.5px;font-size:8px;line-height:8px;color:#444;letter-spacing:-0.2px">123</div>
<div class="abs" style="left:1224px;top:780px;font-size:8px;line-height:8px;color:#444;transform:scaleX(0.9);transform-origin:left">ABC</div>
<div id="redbox"></div>
</body></html>
